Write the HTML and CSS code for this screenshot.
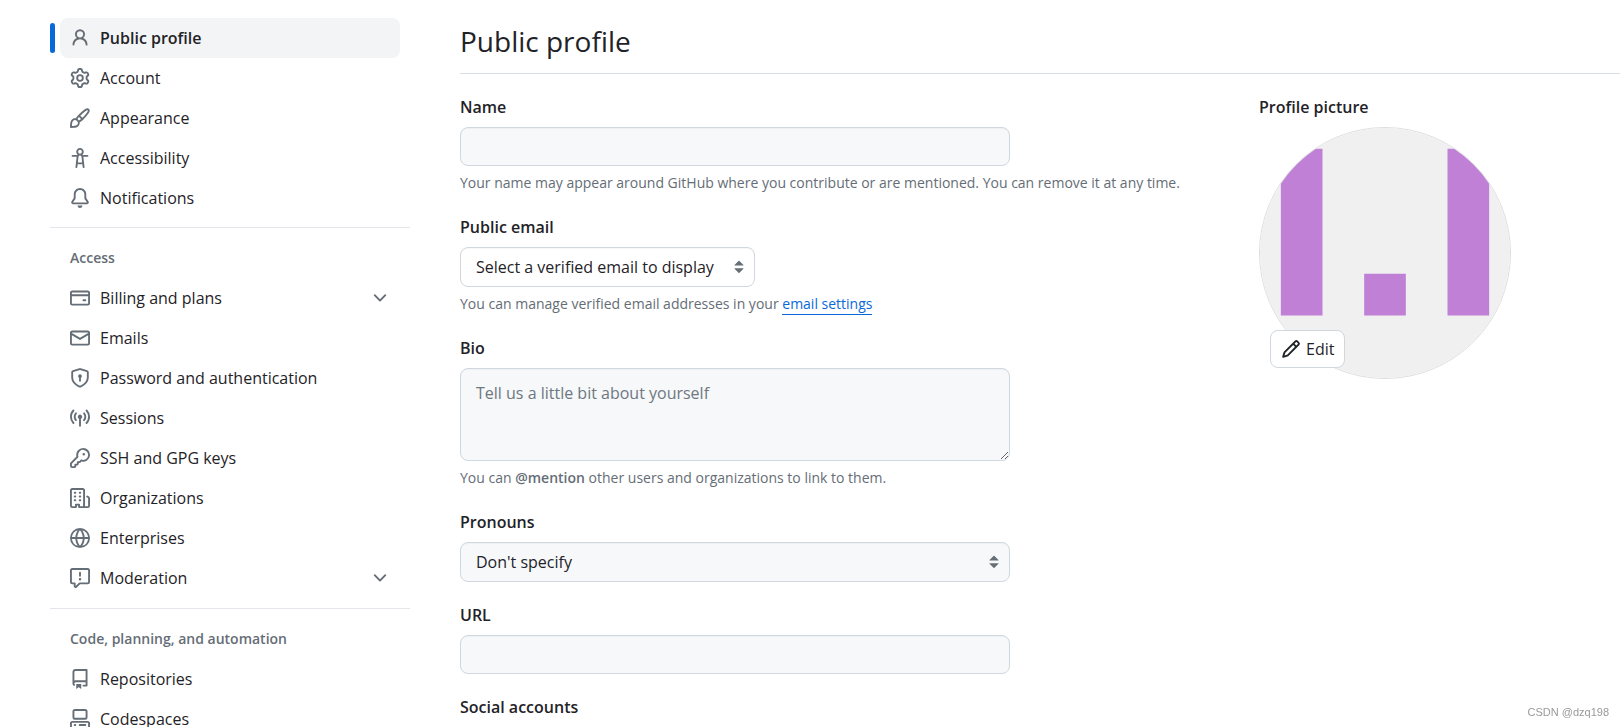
FILE: index.html
```html
<!DOCTYPE html>
<html lang="en">
<head>
<meta charset="utf-8">
<meta name="viewport" content="width=device-width, initial-scale=1">
<title>Public profile</title>
<link rel="stylesheet" href="styles.css">
</head>
<body>
<div class="page">
  <nav class="sidebar" aria-label="User settings">
    <ul class="nav-list">
      <li><a class="nav-item nav-item-current" href="#" aria-current="page"><svg class="icon" viewBox="0 0 16 16" aria-hidden="true"><path d="M10.561 8.073a6.005 6.005 0 0 1 3.432 5.142.75.75 0 1 1-1.498.07 4.5 4.5 0 0 0-8.99 0 .75.75 0 0 1-1.498-.07 6.004 6.004 0 0 1 3.431-5.142 3.999 3.999 0 1 1 5.123 0ZM10.5 5a2.5 2.5 0 1 0-5 0 2.5 2.5 0 0 0 5 0Z"/></svg><span>Public profile</span></a></li>
      <li><a class="nav-item" href="#"><svg class="icon" viewBox="0 0 16 16" aria-hidden="true"><path d="M8 0a8.2 8.2 0 0 1 .701.031C9.444.095 9.99.645 10.16 1.29l.288 1.107c.018.066.079.158.212.224.231.114.454.243.668.386.123.082.233.09.299.071l1.103-.303c.644-.176 1.392.021 1.82.63.27.385.506.792.704 1.218.315.675.111 1.422-.364 1.891l-.814.806c-.049.048-.098.147-.088.294.016.257.016.515 0 .772-.01.147.038.246.088.294l.814.806c.475.469.679 1.216.364 1.891a7.977 7.977 0 0 1-.704 1.217c-.428.61-1.176.807-1.82.63l-1.102-.302c-.067-.019-.177-.011-.3.071a5.909 5.909 0 0 1-.668.386c-.133.066-.194.158-.211.224l-.29 1.106c-.168.646-.715 1.196-1.458 1.26a8.006 8.006 0 0 1-1.402 0c-.743-.064-1.289-.614-1.458-1.26l-.289-1.106c-.018-.066-.079-.158-.212-.224a5.738 5.738 0 0 1-.668-.386c-.123-.082-.233-.09-.299-.071l-1.103.303c-.644.176-1.392-.021-1.82-.63a8.12 8.12 0 0 1-.704-1.218c-.315-.675-.111-1.422.363-1.891l.815-.806c.05-.048.098-.147.088-.294a6.214 6.214 0 0 1 0-.772c.01-.147-.038-.246-.088-.294l-.815-.806C.635 6.045.431 5.298.746 4.623a7.92 7.92 0 0 1 .704-1.217c.428-.61 1.176-.807 1.82-.63l1.102.302c.067.019.177.011.3-.071.214-.143.437-.272.668-.386.133-.066.194-.158.211-.224l.29-1.106C6.009.645 6.556.095 7.299.03 7.53.01 7.764 0 8 0Zm-.571 1.525c-.036.003-.108.036-.137.146l-.289 1.105c-.147.561-.549.967-.998 1.189-.173.086-.34.183-.5.29-.417.278-.97.423-1.529.27l-1.103-.303c-.109-.03-.175.016-.195.045-.22.312-.412.644-.573.99-.014.031-.021.11.059.19l.815.806c.411.406.562.957.53 1.456a4.709 4.709 0 0 0 0 .582c.032.499-.119 1.05-.53 1.456l-.815.806c-.081.08-.073.159-.059.19.162.346.353.677.573.989.02.03.085.076.195.046l1.102-.303c.56-.153 1.113-.008 1.53.27.161.107.328.204.501.29.447.222.85.629.997 1.189l.289 1.105c.029.109.101.143.137.146a6.6 6.6 0 0 0 1.142 0c.036-.003.108-.036.137-.146l.289-1.105c.147-.561.549-.967.998-1.189.173-.086.34-.183.5-.29.417-.278.97-.423 1.529-.27l1.103.303c.109.029.175-.016.195-.045.22-.313.411-.644.573-.99.014-.031.021-.11-.059-.19l-.815-.806c-.411-.406-.562-.957-.53-1.456a4.709 4.709 0 0 0 0-.582c-.032-.499.119-1.05.53-1.456l.815-.806c.081-.08.073-.159.059-.19a6.464 6.464 0 0 0-.573-.989c-.02-.03-.085-.076-.195-.046l-1.102.303c-.56.153-1.113.008-1.53-.27a4.44 4.44 0 0 0-.501-.29c-.447-.222-.85-.629-.997-1.189l-.289-1.105c-.029-.11-.101-.143-.137-.146a6.6 6.6 0 0 0-1.142 0ZM11 8a3 3 0 1 1-6 0 3 3 0 0 1 6 0ZM9.5 8a1.5 1.5 0 1 0-3.001.001A1.5 1.5 0 0 0 9.5 8Z"/></svg><span>Account</span></a></li>
      <li><a class="nav-item" href="#"><svg class="icon" viewBox="0 0 16 16" aria-hidden="true"><path d="M11.134 1.535c.7-.509 1.416-.942 2.076-1.155.649-.21 1.463-.267 2.069.34.603.601.568 1.411.368 2.07-.202.668-.624 1.39-1.125 2.096-1.011 1.424-2.496 2.987-3.775 4.249-1.098 1.084-2.132 1.839-3.04 2.3a3.744 3.744 0 0 1-1.055 3.217c-.431.431-1.065.691-1.657.861-.614.177-1.294.287-1.914.357A21.151 21.151 0 0 1 .797 16H.743l.007-.75H.749L.742 16a.75.75 0 0 1-.743-.742l.743-.008-.742.007v-.054a21.25 21.25 0 0 1 .13-2.284c.067-.647.187-1.287.358-1.914.17-.591.43-1.226.86-1.657a3.746 3.746 0 0 1 3.227-1.054c.466-.893 1.225-1.907 2.314-2.982 1.271-1.255 2.833-2.75 4.245-3.777ZM1.62 13.089c-.051.464-.086.929-.104 1.395.466-.018.932-.053 1.396-.104a10.511 10.511 0 0 0 1.668-.309c.526-.151.856-.325 1.011-.48a2.25 2.25 0 1 0-3.182-3.182c-.155.155-.329.485-.48 1.01a10.515 10.515 0 0 0-.309 1.67Zm10.396-10.34c-1.224.89-2.605 2.189-3.822 3.384l1.718 1.718c1.21-1.205 2.51-2.597 3.387-3.833.47-.662.78-1.227.912-1.662.134-.444.032-.551.009-.575h-.001V1.78c-.014-.014-.113-.113-.548.027-.432.14-.995.462-1.655.942Zm-4.832 7.266-.001.001a9.859 9.859 0 0 0 1.63-1.142L7.155 7.216a9.7 9.7 0 0 0-1.161 1.607c.482.302.889.71 1.19 1.192Z"/></svg><span>Appearance</span></a></li>
      <li><a class="nav-item" href="#"><svg class="icon" viewBox="0 0 16 16" aria-hidden="true"><path d="M9.923 5.302c.063.063.122.129.178.198H14A.75.75 0 0 1 14 7h-3.3l.578 5.163.362 2.997a.75.75 0 0 1-1.49.18L9.868 13H6.132l-.282 2.34a.75.75 0 0 1-1.49-.18l.362-2.997L5.3 7H2a.75.75 0 0 1 0-1.5h3.9a2.54 2.54 0 0 1 .176-.198 3 3 0 1 1 3.847 0ZM9.2 7.073h-.001a1.206 1.206 0 0 0-2.398 0L6.305 11.5h3.39ZM9.5 3a1.5 1.5 0 1 0-3.001.001A1.5 1.5 0 0 0 9.5 3Z"/></svg><span>Accessibility</span></a></li>
      <li><a class="nav-item" href="#"><svg class="icon" viewBox="0 0 16 16" aria-hidden="true"><path d="M8 16a2 2 0 0 0 1.985-1.75c.017-.137-.097-.25-.235-.25h-3.5c-.138 0-.252.113-.235.25A2 2 0 0 0 8 16ZM3 5a5 5 0 0 1 10 0v2.947c0 .05.015.098.042.139l1.703 2.555A1.519 1.519 0 0 1 13.482 13H2.518a1.516 1.516 0 0 1-1.263-2.36l1.703-2.554A.255.255 0 0 0 3 7.947Zm5-3.5A3.5 3.5 0 0 0 4.5 5v2.947c0 .346-.102.683-.294.97l-1.703 2.556a.017.017 0 0 0-.003.01l.001.006c0 .002.002.004.004.006l.006.004.007.001h10.964l.007-.001.006-.004.004-.006.001-.007a.017.017 0 0 0-.003-.01l-1.703-2.554a1.745 1.745 0 0 1-.294-.97V5A3.5 3.5 0 0 0 8 1.5Z"/></svg><span>Notifications</span></a></li>
    </ul>
    <section class="nav-group">
      <h3 class="nav-heading">Access</h3>
      <ul class="nav-list">
        <li><button class="nav-item" type="button" aria-expanded="false"><svg class="icon" viewBox="0 0 16 16" aria-hidden="true"><path d="M10.75 9a.75.75 0 0 0 0 1.5h1.5a.75.75 0 0 0 0-1.5h-1.5Z"/><path d="M0 3.75C0 2.784.784 2 1.75 2h12.5c.966 0 1.75.784 1.75 1.75v8.5A1.75 1.75 0 0 1 14.25 14H1.75A1.75 1.75 0 0 1 0 12.25ZM14.5 6.5h-13v5.75c0 .138.112.25.25.25h12.5a.25.25 0 0 0 .25-.25Zm0-2.75a.25.25 0 0 0-.25-.25H1.75a.25.25 0 0 0-.25.25V5h13Z"/></svg><span>Billing and plans</span><svg class="icon chevron" viewBox="0 0 16 16" aria-hidden="true"><path d="M12.78 5.22a.749.749 0 0 1 0 1.06l-4.25 4.25a.749.749 0 0 1-1.06 0L3.22 6.28a.749.749 0 1 1 1.06-1.06L8 8.939l3.72-3.719a.749.749 0 0 1 1.06 0Z"/></svg></button></li>
        <li><a class="nav-item" href="#"><svg class="icon" viewBox="0 0 16 16" aria-hidden="true"><path d="M1.75 2h12.5c.966 0 1.75.784 1.75 1.75v8.5A1.75 1.75 0 0 1 14.25 14H1.75A1.75 1.75 0 0 1 0 12.25v-8.5C0 2.784.784 2 1.75 2ZM1.5 12.251c0 .138.112.25.25.25h12.5a.25.25 0 0 0 .25-.25V5.809L8.38 9.397a.75.75 0 0 1-.76 0L1.5 5.809v6.442Zm13-8.181v-.32a.25.25 0 0 0-.25-.25H1.75a.25.25 0 0 0-.25.25v.32L8 7.88Z"/></svg><span>Emails</span></a></li>
        <li><a class="nav-item" href="#"><svg class="icon" viewBox="0 0 16 16" aria-hidden="true"><path d="m8.533.133 5.25 1.68A1.75 1.75 0 0 1 15 3.48V7c0 1.566-.32 3.182-1.303 4.682-.983 1.498-2.585 2.813-5.032 3.855a1.697 1.697 0 0 1-1.33 0c-2.447-1.042-4.049-2.357-5.032-3.855C1.32 10.182 1 8.566 1 7V3.48a1.75 1.75 0 0 1 1.217-1.667l5.25-1.68a1.748 1.748 0 0 1 1.066 0Zm-.61 1.429.001.001-5.25 1.68a.251.251 0 0 0-.174.237V7c0 1.36.275 2.666 1.057 3.859.784 1.194 2.121 2.342 4.366 3.298a.196.196 0 0 0 .154 0c2.245-.957 3.582-2.103 4.366-3.297C13.225 9.666 13.5 8.358 13.5 7V3.48a.25.25 0 0 0-.174-.238l-5.25-1.68a.25.25 0 0 0-.153 0ZM9.5 6.5c0 .536-.286 1.032-.75 1.3v2.45a.75.75 0 0 1-1.5 0V7.8A1.5 1.5 0 1 1 9.5 6.5Z"/></svg><span>Password and authentication</span></a></li>
        <li><a class="nav-item" href="#"><svg class="icon" viewBox="0 0 16 16" aria-hidden="true"><path d="M8.75 8.582v5.668a.75.75 0 0 1-1.5 0V8.582a1.75 1.75 0 1 1 1.5 0Zm3.983-7.125a.75.75 0 0 1 1.06.026A7.976 7.976 0 0 1 16 7c0 2.139-.84 4.083-2.207 5.517a.75.75 0 1 1-1.086-1.034A6.474 6.474 0 0 0 14.5 7a6.474 6.474 0 0 0-1.793-4.483.75.75 0 0 1 .026-1.06Zm-9.466 0c.3.286.312.76.026 1.06A6.474 6.474 0 0 0 1.5 7a6.47 6.47 0 0 0 1.793 4.483.75.75 0 0 1-1.086 1.034A7.973 7.973 0 0 1 0 7c0-2.139.84-4.083 2.207-5.517a.75.75 0 0 1 1.06-.026Zm8.556 2.321A4.988 4.988 0 0 1 13 7a4.988 4.988 0 0 1-1.177 3.222.75.75 0 1 1-1.146-.967A3.487 3.487 0 0 0 11.5 7c0-.86-.309-1.645-.823-2.255a.75.75 0 0 1 1.146-.967Zm-6.492.958A3.48 3.48 0 0 0 4.5 7a3.48 3.48 0 0 0 .823 2.255.75.75 0 0 1-1.146.967A4.981 4.981 0 0 1 3 7a4.982 4.982 0 0 1 1.188-3.236.75.75 0 1 1 1.143.972Z"/></svg><span>Sessions</span></a></li>
        <li><a class="nav-item" href="#"><svg class="icon" viewBox="0 0 16 16" aria-hidden="true"><path d="M10.5 0a5.499 5.499 0 1 1-1.288 10.848l-.932.932a.749.749 0 0 1-.53.22H7v.75a.749.749 0 0 1-.22.53l-.5.5a.749.749 0 0 1-.53.22H5v.75a.749.749 0 0 1-.22.53l-.5.5a.749.749 0 0 1-.53.22h-2A1.75 1.75 0 0 1 0 14.25v-2c0-.199.079-.389.22-.53l4.932-4.932A5.5 5.5 0 0 1 10.5 0Zm-4 5.5c-.001.431.069.86.205 1.269a.75.75 0 0 1-.181.768L1.5 12.56v1.69c0 .138.112.25.25.25h1.69l.06-.06v-1.19a.75.75 0 0 1 .75-.75h1.19l.06-.06v-1.19a.75.75 0 0 1 .75-.75h1.19l1.023-1.025a.75.75 0 0 1 .768-.18A4 4 0 1 0 6.5 5.5ZM11 6a1 1 0 1 1 0-2 1 1 0 0 1 0 2Z"/></svg><span>SSH and GPG keys</span></a></li>
        <li><a class="nav-item" href="#"><svg class="icon" viewBox="0 0 16 16" aria-hidden="true"><path d="M1.75 16A1.75 1.75 0 0 1 0 14.25V1.75C0 .784.784 0 1.75 0h8.5C11.216 0 12 .784 12 1.75v12.5c0 .085-.006.168-.018.25h2.268a.25.25 0 0 0 .25-.25V8.285a.25.25 0 0 0-.111-.208l-1.055-.703a.749.749 0 1 1 .832-1.248l1.055.703c.487.325.779.871.779 1.456v5.965A1.75 1.75 0 0 1 14.25 16h-3.5a.766.766 0 0 1-.197-.026c-.099.017-.2.026-.303.026h-3a.75.75 0 0 1-.75-.75V14h-1v1.25a.75.75 0 0 1-.75.75Zm-.25-1.75c0 .138.112.25.25.25H4v-1.25a.75.75 0 0 1 .75-.75h2.5a.75.75 0 0 1 .75.75v1.25h2.25a.25.25 0 0 0 .25-.25V1.75a.25.25 0 0 0-.25-.25h-8.5a.25.25 0 0 0-.25.25ZM3.75 6h.5a.75.75 0 0 1 0 1.5h-.5a.75.75 0 0 1 0-1.5ZM3 3.75A.75.75 0 0 1 3.75 3h.5a.75.75 0 0 1 0 1.5h-.5A.75.75 0 0 1 3 3.75Zm4 3A.75.75 0 0 1 7.75 6h.5a.75.75 0 0 1 0 1.5h-.5A.75.75 0 0 1 7 6.75ZM7.75 3h.5a.75.75 0 0 1 0 1.5h-.5a.75.75 0 0 1 0-1.5ZM3 9.75A.75.75 0 0 1 3.75 9h.5a.75.75 0 0 1 0 1.5h-.5A.75.75 0 0 1 3 9.75ZM7.75 9h.5a.75.75 0 0 1 0 1.5h-.5a.75.75 0 0 1 0-1.5Z"/></svg><span>Organizations</span></a></li>
        <li><a class="nav-item" href="#"><svg class="icon" viewBox="0 0 16 16" aria-hidden="true"><path d="M8 0a8 8 0 1 1 0 16A8 8 0 0 1 8 0ZM5.78 8.75a9.64 9.64 0 0 0 1.363 4.177c.255.426.542.832.857 1.215.245-.296.551-.705.857-1.215A9.64 9.64 0 0 0 10.22 8.75Zm4.44-1.5a9.64 9.64 0 0 0-1.363-4.177c-.307-.51-.612-.919-.857-1.215a9.927 9.927 0 0 0-.857 1.215A9.64 9.64 0 0 0 5.78 7.25Zm-5.944 1.5H1.543a6.507 6.507 0 0 0 4.666 5.5c-.123-.181-.24-.365-.352-.552-.715-1.192-1.437-2.874-1.581-4.948Zm-2.733-1.5h2.733c.144-2.074.866-3.756 1.58-4.948.12-.197.237-.381.353-.552a6.507 6.507 0 0 0-4.666 5.5Zm10.181 1.5c-.144 2.074-.866 3.756-1.58 4.948-.12.197-.237.381-.353.552a6.507 6.507 0 0 0 4.666-5.5Zm2.733-1.5a6.507 6.507 0 0 0-4.666-5.5c.123.181.24.365.353.552.714 1.192 1.436 2.874 1.58 4.948Z"/></svg><span>Enterprises</span></a></li>
        <li><button class="nav-item" type="button" aria-expanded="false"><svg class="icon" viewBox="0 0 16 16" aria-hidden="true"><path d="M0 1.75C0 .784.784 0 1.75 0h12.5C15.216 0 16 .784 16 1.75v9.5A1.75 1.75 0 0 1 14.25 13H8.06l-2.573 2.573A1.458 1.458 0 0 1 3 14.543V13H1.75A1.75 1.75 0 0 1 0 11.25Zm1.75-.25a.25.25 0 0 0-.25.25v9.5c0 .138.112.25.25.25h2a.75.75 0 0 1 .75.75v2.19l2.72-2.72a.749.749 0 0 1 .53-.22h6.5a.25.25 0 0 0 .25-.25v-9.5a.25.25 0 0 0-.25-.25Zm7 2.25v2.5a.75.75 0 0 1-1.5 0v-2.5a.75.75 0 0 1 1.5 0ZM9 9a1 1 0 1 1-2 0 1 1 0 0 1 2 0Z"/></svg><span>Moderation</span><svg class="icon chevron" viewBox="0 0 16 16" aria-hidden="true"><path d="M12.78 5.22a.749.749 0 0 1 0 1.06l-4.25 4.25a.749.749 0 0 1-1.06 0L3.22 6.28a.749.749 0 1 1 1.06-1.06L8 8.939l3.72-3.719a.749.749 0 0 1 1.06 0Z"/></svg></button></li>
      </ul>
    </section>
    <section class="nav-group">
      <h3 class="nav-heading">Code, planning, and automation</h3>
      <ul class="nav-list">
        <li><a class="nav-item" href="#"><svg class="icon" viewBox="0 0 16 16" aria-hidden="true"><path d="M2 2.5A2.5 2.5 0 0 1 4.5 0h8.75a.75.75 0 0 1 .75.75v12.5a.75.75 0 0 1-.75.75h-2.5a.75.75 0 0 1 0-1.5h1.75v-2h-8a1 1 0 0 0-.714 1.7.75.75 0 1 1-1.072 1.05A2.495 2.495 0 0 1 2 11.5Zm10.5-1h-8a1 1 0 0 0-1 1v6.708A2.486 2.486 0 0 1 4.5 9h8ZM5 12.25a.25.25 0 0 1 .25-.25h3.5a.25.25 0 0 1 .25.25v3.25a.25.25 0 0 1-.4.2l-1.45-1.087a.249.249 0 0 0-.3 0L5.4 15.7a.25.25 0 0 1-.4-.2Z"/></svg><span>Repositories</span></a></li>
        <li><a class="nav-item" href="#"><svg class="icon" viewBox="0 0 16 16" aria-hidden="true"><path d="M0 11.25c0-.966.784-1.75 1.75-1.75h12.5c.966 0 1.75.784 1.75 1.75v3A1.75 1.75 0 0 1 14.25 16H1.75A1.75 1.75 0 0 1 0 14.25Zm2-9.5C2 .784 2.784 0 3.75 0h8.5C13.216 0 14 .784 14 1.75v5a1.75 1.75 0 0 1-1.75 1.75h-8.5A1.75 1.75 0 0 1 2 6.75Zm1.75-.25a.25.25 0 0 0-.25.25v5c0 .138.112.25.25.25h8.5a.25.25 0 0 0 .25-.25v-5a.25.25 0 0 0-.25-.25Zm-2 9.5a.25.25 0 0 0-.25.25v3c0 .138.112.25.25.25h12.5a.25.25 0 0 0 .25-.25v-3a.25.25 0 0 0-.25-.25Z"/><path d="M7 12.75a.75.75 0 0 1 .75-.75h4.5a.75.75 0 0 1 0 1.5h-4.5a.75.75 0 0 1-.75-.75Zm-4 0a.75.75 0 0 1 .75-.75h.5a.75.75 0 0 1 0 1.5h-.5a.75.75 0 0 1-.75-.75Z"/></svg><span>Codespaces</span></a></li>
      </ul>
    </section>
  </nav>

  <main class="content">
    <h1 class="title">Public profile</h1>
    <div class="columns">
      <form class="form">
        <div class="field">
          <label class="label" for="name">Name</label>
          <input class="control" id="name" type="text">
          <p class="hint">Your name may appear around GitHub where you contribute or are mentioned. You can remove it at any time.</p>
        </div>
        <div class="field">
          <label class="label" for="email">Public email</label>
          <div class="select-wrap select-wrap-fit">
            <select class="control select select-plain" id="email"><option>Select a verified email to display</option></select>
            <svg class="icon select-arrows" viewBox="0 0 16 16" aria-hidden="true"><path d="m4.427 9.427 3.396 3.396a.251.251 0 0 0 .354 0l3.396-3.396A.25.25 0 0 0 11.396 9H4.604a.25.25 0 0 0-.177.427ZM4.423 6.47 7.82 3.072a.25.25 0 0 1 .354 0L11.57 6.47a.25.25 0 0 1-.177.427H4.6a.25.25 0 0 1-.177-.427Z"/></svg>
          </div>
          <p class="hint">You can manage verified email addresses in your <a class="link" href="#">email settings</a></p>
        </div>
        <div class="field">
          <label class="label" for="bio">Bio</label>
          <textarea class="control textarea" id="bio" placeholder="Tell us a little bit about yourself"></textarea>
          <p class="hint">You can <strong class="mention">@mention</strong> other users and organizations to link to them.</p>
        </div>
        <div class="field">
          <label class="label" for="pronouns">Pronouns</label>
          <div class="select-wrap">
            <select class="control select" id="pronouns"><option>Don't specify</option></select>
            <svg class="icon select-arrows" viewBox="0 0 16 16" aria-hidden="true"><path d="m4.427 9.427 3.396 3.396a.251.251 0 0 0 .354 0l3.396-3.396A.25.25 0 0 0 11.396 9H4.604a.25.25 0 0 0-.177.427ZM4.423 6.47 7.82 3.072a.25.25 0 0 1 .354 0L11.57 6.47a.25.25 0 0 1-.177.427H4.6a.25.25 0 0 1-.177-.427Z"/></svg>
          </div>
        </div>
        <div class="field">
          <label class="label" for="url">URL</label>
          <input class="control" id="url" type="url">
        </div>
        <h2 class="label">Social accounts</h2>
      </form>
      <section class="picture">
        <h2 class="label">Profile picture</h2>
        <div class="avatar-box">
          <svg class="avatar" viewBox="0 0 420 420" role="img" aria-label="Profile picture"><path fill="#f0f0f0" d="M0 0h420v420H0z"/><path fill="#bf80d5" d="M35 35h70v280H35zM315 35h70v280h-70zM175 245h70v70h-70z"/></svg>
          <button class="edit" type="button"><svg class="icon edit-icon" viewBox="0 0 16 16" aria-hidden="true"><path d="M11.013 1.427a1.75 1.75 0 0 1 2.474 0l1.086 1.086a1.75 1.75 0 0 1 0 2.474l-8.61 8.61c-.21.21-.47.364-.756.445l-3.251.93a.75.75 0 0 1-.927-.928l.929-3.25c.081-.286.235-.547.445-.758l8.61-8.61Zm.176 4.823L9.75 4.81l-6.286 6.287a.253.253 0 0 0-.064.108l-.558 1.953 1.953-.558a.253.253 0 0 0 .108-.064Zm1.238-3.763a.25.25 0 0 0-.354 0L10.811 3.75l1.439 1.44 1.263-1.263a.25.25 0 0 0 0-.354Z"/></svg>Edit</button>
        </div>
      </section>
    </div>
  </main>
</div>
<div class="watermark">CSDN @dzq198</div>
</body>
</html>
```

FILE: styles.css
```css
*, *::before, *::after {
  box-sizing: border-box;
}

body {
  margin: 0;
  height: 100vh;
  overflow: hidden;
  background: #fff;
  color: #1f2328;
  font: 400 16px/26px "Open Sans", "Noto Sans", sans-serif;
}

h1, h2, h3, p, ul {
  margin: 0;
  padding: 0;
}

.page {
  display: flex;
  gap: 50px;
  padding: 18px 4px 0 50px;
}

.sidebar {
  flex: 0 0 360px;
}

.nav-list {
  list-style: none;
  padding: 0 10px;
}

.nav-item {
  position: relative;
  display: flex;
  align-items: center;
  gap: 10px;
  width: 100%;
  height: 40px;
  padding: 0 10px;
  border: 0;
  border-radius: 8px;
  background: none;
  color: inherit;
  font: inherit;
  text-align: left;
  text-decoration: none;
}

.nav-item-current {
  background: #f3f4f6;
  font-weight: 600;
}

.nav-item-current::before {
  content: "";
  position: absolute;
  left: -10px;
  top: 5px;
  width: 5px;
  height: 30px;
  border-radius: 3px;
  background: #0969da;
}

.icon {
  flex: none;
  width: 20px;
  height: 20px;
  fill: #656d76;
}

.chevron {
  margin-left: auto;
}

.nav-group {
  margin-top: 9px;
  padding: 10px 0 1px;
  border-top: 1px solid #e3e6ea;
}

.nav-heading {
  padding: 0 20px;
  color: #656d76;
  font-size: 14px;
  font-weight: 600;
  line-height: 40px;
}

.content {
  flex: 1;
  min-width: 0;
}

.title {
  padding-bottom: 9px;
  border-bottom: 1px solid #d8dee4;
  font-size: 28px;
  font-weight: 400;
  line-height: 46px;
}

.columns {
  display: flex;
  justify-content: space-between;
  gap: 50px;
  padding-top: 20px;
}

.form {
  flex: 1;
  min-width: 0;
}

.field {
  margin-bottom: 20px;
}

.label {
  display: block;
  margin-bottom: 7px;
  font-size: 16px;
  font-weight: 600;
  line-height: 26px;
}

.control {
  display: block;
  width: 100%;
  max-width: 550px;
  height: 39px;
  padding: 0 15px;
  border: 1px solid #d0d7de;
  border-radius: 8px;
  background: #f6f8fa;
  box-shadow: inset 0 1px 0 rgba(208, 215, 222, 0.2);
  color: inherit;
  font: inherit;
}

.textarea {
  height: 93px;
  padding: 11px 15px;
  resize: both;
}

.textarea::placeholder {
  color: #6e7781;
}

.select-wrap {
  position: relative;
  max-width: 550px;
}

.select-wrap-fit {
  width: fit-content;
  min-width: 295px;
}

.select {
  height: 40px;
  padding-right: 30px;
  appearance: none;
}

.select-plain {
  background: #fff;
}

.select-arrows {
  position: absolute;
  right: 6px;
  top: 10px;
  pointer-events: none;
}

.hint {
  margin-top: 6px;
  color: #656d76;
  font-size: 14px;
  line-height: 22px;
}

.mention {
  font-weight: 600;
}

.link {
  display: inline-block;
  border-bottom: 1px solid #0969da;
  color: #0969da;
  line-height: 20px;
  text-decoration: none;
}

.picture {
  flex: 0 0 361px;
}

.avatar-box {
  position: relative;
  width: 252px;
}

.avatar {
  display: block;
  width: 252px;
  height: 252px;
  border: 1px solid #dddee0;
  border-radius: 50%;
}

.edit {
  position: absolute;
  left: 11px;
  bottom: 11px;
  display: flex;
  align-items: center;
  gap: 5px;
  height: 38px;
  padding: 0 10px;
  border: 1px solid #d0d7de;
  border-radius: 8px;
  background: #fff;
  color: inherit;
  font: inherit;
}

.edit-icon {
  fill: #1f2328;
}

.watermark {
  position: fixed;
  right: 15px;
  bottom: 7px;
  color: #999;
  font: 11px/16px "Liberation Sans", Arial, sans-serif;
}
```
